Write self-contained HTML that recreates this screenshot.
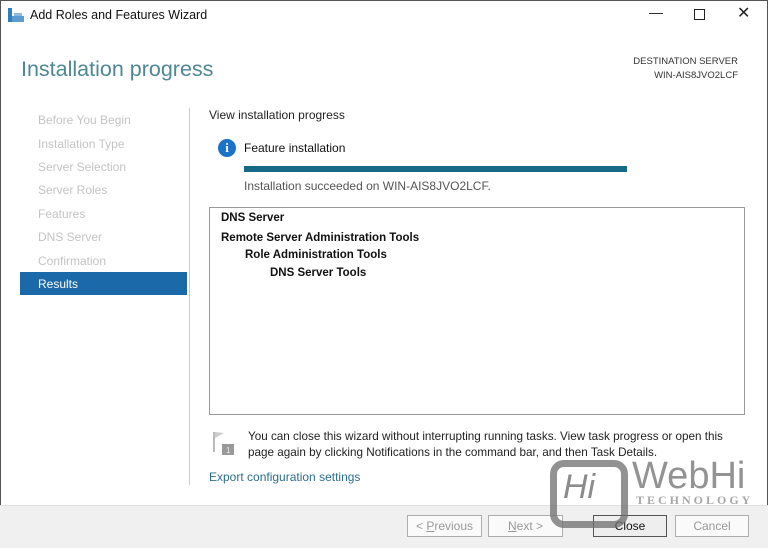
<!DOCTYPE html>
<html><head><style>
body{margin:0;width:768px;height:547px;overflow:hidden;background:#fff;font-family:"Liberation Sans",sans-serif;position:relative}
.a{position:absolute;white-space:nowrap}
.nav{font-size:12px;color:#c4c4c4;left:38px}
.b{font-size:11.5px;font-weight:bold;color:#111}
.btn{position:absolute;top:515px;height:20px;border:1px solid #adadad;background:#fafafa;font-size:12px;text-align:center;line-height:20px;color:#999}
</style></head><body>
<div class="a" style="left:0;top:0;width:766px;height:545px;border:1px solid #555"></div>
<svg class="a" style="left:8px;top:8px" width="16" height="14"><rect x="0" y="0" width="4" height="14" fill="#2b7fc1"/><rect x="4" y="8" width="12" height="6" fill="#5a9bd0"/><rect x="6" y="5" width="8" height="3" fill="#8fb9dc"/></svg>
<div class="a" style="left:30px;top:8px;font-size:12.5px;color:#111">Add Roles and Features Wizard</div>
<div class="a" style="left:649px;top:4px;font-size:14px;color:#222">&#8212;</div>
<div class="a" style="left:694px;top:9px;width:9px;height:9px;border:1px solid #222"></div>
<div class="a" style="left:737px;top:3px;font-size:16px;color:#222">&#10005;</div>
<div class="a" style="left:21px;top:57px;font-size:21.5px;color:#4f8796">Installation progress</div>
<div class="a" style="right:30px;top:55px;font-size:9.5px;color:#333;text-align:right;line-height:14px">DESTINATION SERVER<br>WIN-AIS8JVO2LCF</div>
<div class="a nav" style="top:113px">Before You Begin</div>
<div class="a nav" style="top:137px">Installation Type</div>
<div class="a nav" style="top:160px">Server Selection</div>
<div class="a nav" style="top:183px">Server Roles</div>
<div class="a nav" style="top:207px">Features</div>
<div class="a nav" style="top:230px">DNS Server</div>
<div class="a nav" style="top:254px">Confirmation</div>
<div class="a" style="left:20px;top:272px;width:167px;height:23px;background:#1b69a8"></div>
<div class="a" style="left:38px;top:277px;font-size:12px;color:#fff">Results</div>
<div class="a" style="left:189px;top:108px;width:1px;height:377px;background:#ccc"></div>
<div class="a" style="left:209px;top:108px;font-size:12px;color:#222">View installation progress</div>
<div class="a" style="left:218px;top:139px;width:18px;height:18px;border-radius:50%;background:#1b73c8;color:#fff;font-weight:bold;font-size:13px;text-align:center;line-height:18px;font-family:'Liberation Serif',serif">i</div>
<div class="a" style="left:244px;top:141px;font-size:12px;color:#111">Feature installation</div>
<div class="a" style="left:244px;top:166px;width:383px;height:6px;background:#176a86"></div>
<div class="a" style="left:244px;top:179px;font-size:12px;color:#555">Installation succeeded on WIN-AIS8JVO2LCF.</div>
<div class="a" style="left:209px;top:207px;width:534px;height:206px;border:1px solid #9a9a9a"></div>
<div class="a b" style="left:221px;top:212px">DNS Server</div>
<div class="a b" style="left:221px;top:232px">Remote Server Administration Tools</div>
<div class="a b" style="left:245px;top:249px">Role Administration Tools</div>
<div class="a b" style="left:270px;top:267px">DNS Server Tools</div>
<svg class="a" style="left:212px;top:430px" width="24" height="26"><path d="M2 2 L2 22" stroke="#bbb" stroke-width="2"/><path d="M3 2 L12 3 L3 8Z" fill="#ccc"/><rect x="10" y="14" width="12" height="11" fill="#999"/><text x="14" y="23" font-size="8" fill="#eee" font-family="Liberation Sans">1</text></svg>
<div class="a" style="left:248px;top:429px;font-size:11.7px;color:#222;line-height:16px">You can close this wizard without interrupting running tasks. View task progress or open this<br>page again by clicking Notifications in the command bar, and then Task Details.</div>
<div class="a" style="left:209px;top:470px;font-size:12px;color:#2a6f90">Export configuration settings</div>
<div class="a" style="left:0;top:505px;width:768px;height:42px;background:#f0f0f0;border-top:1px solid #dfdfdf"></div>
<div class="btn" style="left:407px;width:73px">&lt; <u>P</u>revious</div>
<div class="btn" style="left:488px;width:73px"><u>N</u>ext &gt;</div>
<div class="btn" style="left:593px;width:72px;border:1px solid #555;color:#111;background:#eee">Close</div>
<div class="btn" style="left:675px;width:72px">Cancel</div>
<div class="a" style="left:550px;top:460px;width:78px;height:68px;border:7px solid rgba(110,110,110,.75);border-radius:14px;box-sizing:border-box"></div>
<div class="a" style="left:563px;top:468px;font-size:34px;font-style:italic;color:rgba(110,110,110,.8)">Hi</div>
<div class="a" style="left:632px;top:455px;font-size:38px;color:rgba(120,120,120,.8)">WebHi</div>
<div class="a" style="left:636px;top:493px;font-size:12px;letter-spacing:3px;font-family:'Liberation Serif',serif;font-weight:bold;color:rgba(130,130,130,.7)">TECHNOLOGY</div>
</body></html>
